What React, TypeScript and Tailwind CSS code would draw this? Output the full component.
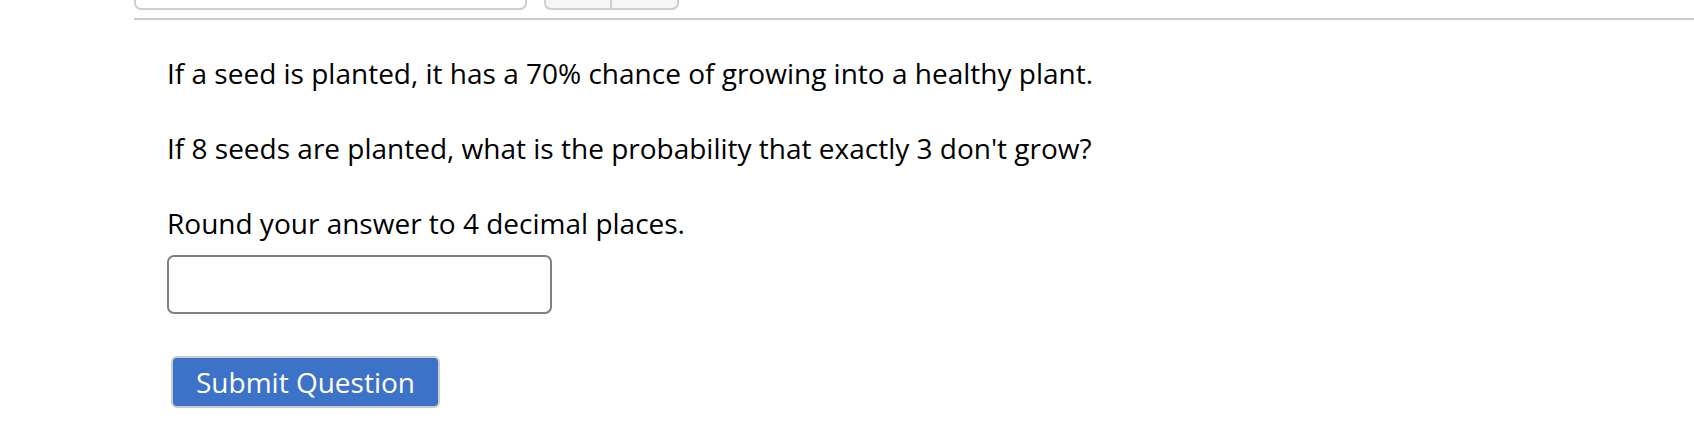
export default function App() {
  return (
    <div className="min-h-[436px] w-full bg-white font-['Open_Sans',sans-serif] text-black">
      <div className="pl-[134px]">
        {/* cut-off controls above the divider */}
        <div className="flex h-[10px] items-start">
          <div className="h-[10px] w-[393px] rounded-b-[7px] border-x-2 border-b-2 border-[#cfcfcf] bg-white" />
          <div className="ml-[17px] flex h-[10px] w-[135px] overflow-hidden rounded-b-[7px] border-x-2 border-b-2 border-[#cfcfcf] bg-[#f6f6f6]">
            <div className="w-[66px] border-r-2 border-[#cfcfcf]" />
            <div className="flex-1" />
          </div>
        </div>
        <div className="mt-[8px] h-[2px] w-full bg-[#cbcbcb]" />

        <div className="pl-[33px] pt-[32px] text-[28px] leading-[42px]">
          <p>If a seed is planted, it has a 70% chance of growing into a healthy plant.</p>
          <p className="mt-[33px]">If 8 seeds are planted, what is the probability that exactly 3 don't grow?</p>
          <p className="mt-[33px]">Round your answer to 4 decimal places.</p>
          <input
            type="text"
            className="mt-[11px] block h-[59px] w-[385px] rounded-[7px] border-2 border-[#808080] bg-white px-3 text-[24px] outline-none"
          />
          <button className="ml-[4px] mt-[42px] block h-[52px] w-[269px] rounded-[6px] border-2 border-[#cccccc] bg-[#3c72c8] text-[28px] leading-none text-white">
            Submit Question
          </button>
        </div>
      </div>
    </div>
  );
}
